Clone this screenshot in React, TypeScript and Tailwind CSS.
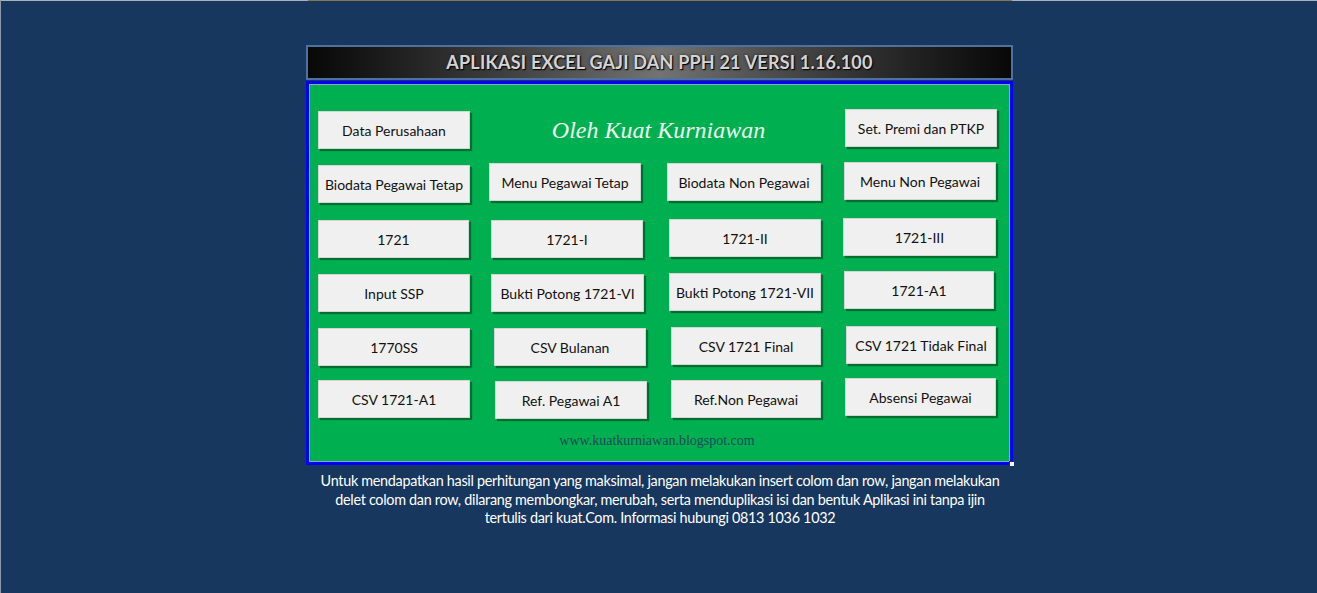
import React from "react";

type Btn = { label: string; off: string; w?: string };

// offsets keep the slightly uneven placement of the sheet's buttons
const rows: (Btn | null)[][] = [
  [{ label: "Data Perusahaan", off: "" }, null, null, { label: "Set. Premi dan PTKP", off: "ml-[2px] mt-[-2px]" }],
  [
    { label: "Biodata Pegawai Tetap", off: "" },
    { label: "Menu Pegawai Tetap", off: "ml-[-4px] mt-[-2px]" },
    { label: "Biodata Non Pegawai", off: "ml-[-1px] mt-[-2px]", w: "w-[154px]" },
    { label: "Menu Non Pegawai", off: "ml-[1px] mt-[-3px]" },
  ],
  [
    { label: "1721", off: "mt-[1px]", w: "w-[151px]" },
    { label: "1721-I", off: "ml-[-2px] mt-[1px]" },
    { label: "1721-II", off: "ml-[1px]" },
    { label: "1721-III", off: "mt-[-1px]", w: "w-[153px]" },
  ],
  [
    { label: "Input SSP", off: "mt-[1px]" },
    { label: "Bukti Potong 1721-VI", off: "ml-[-2px] mt-[1px]", w: "w-[153px]" },
    { label: "Bukti Potong 1721-VII", off: "ml-[1px]" },
    { label: "1721-A1", off: "ml-[1px] mt-[-2px]", w: "w-[150px]" },
  ],
  [
    { label: "1770SS", off: "mt-[1px]" },
    { label: "CSV Bulanan", off: "ml-[1px] mt-[1px]" },
    { label: "CSV 1721 Final", off: "ml-[3px]", w: "w-[150px]" },
    { label: "CSV 1721 Tidak Final", off: "ml-[3px] mt-[-1px]", w: "w-[150px]" },
  ],
  [
    { label: "CSV 1721-A1", off: "mt-[-1px]" },
    { label: "Ref. Pegawai A1", off: "ml-[2px]" },
    { label: "Ref.Non Pegawai", off: "ml-[3px] mt-[-1px]", w: "w-[150px]" },
    { label: "Absensi Pegawai", off: "ml-[2px] mt-[-3px]", w: "w-[151px]" },
  ],
];

function SheetButton({ b }: { b: Btn }) {
  return (
    <button
      className={`${b.w ?? "w-[152px]"} ${b.off} h-[38px] bg-[#f0f0f0] text-[14px] text-[#111] font-['Lato',sans-serif] border border-[#d4d4d4] shadow-[2px_2px_1px_rgba(0,0,0,0.38)] flex items-center justify-center`}
    >
      {b.label}
    </button>
  );
}

export default function App() {
  return (
    <div className="relative min-h-[593px] w-full bg-[#17375e] overflow-hidden">
      {/* thin sheet edge lines */}
      <div className="flex h-px">
        <div className="w-[308px] bg-[#a7b0bc]" />
        <div className="w-[704px] bg-[#8a7553]" />
        <div className="flex-1 bg-[#a7b0bc]" />
      </div>
      <div className="absolute left-0 top-0 h-full w-px bg-[#8f9aa8]" />

      <div className="ml-[306px] mt-[44px] w-[707px]">
        {/* header bar */}
        <div className="h-[35px] border-2 border-[#4d71a0] bg-linear-to-r from-[#080808] via-[#737373] to-[#080808] flex items-center justify-center">
          <span className="font-['Lato',sans-serif] font-bold text-[18px] tracking-[0.2px] text-[#d4d4d4] [text-shadow:1px_1px_1px_#000,0_0_3px_#222]">
            APLIKASI EXCEL GAJI DAN PPH 21 VERSI 1.16.100
          </span>
        </div>

        {/* green panel */}
        <div className="relative mt-[1px] h-[384px] border-[3px] border-[#0000ff] bg-[#00b050] shadow-[inset_0_0_0_1px_#8ea6c6] pl-[9px] pt-[27px]">
          <div className="grid grid-cols-[152px_152px_152px_152px] gap-x-[23px] gap-y-[16px] auto-rows-[38px]">
            {rows.map((r, ri) =>
              ri === 0 ? (
                <React.Fragment key={ri}>
                  <SheetButton b={r[0]!} />
                  <div className="col-span-2 flex items-center justify-center pl-[4px]">
                    <span className="font-['Liberation_Serif',serif] italic text-[24px] text-[#f0fbf0]">
                      Oleh Kuat Kurniawan
                    </span>
                  </div>
                  <SheetButton b={r[3]!} />
                </React.Fragment>
              ) : (
                r.map((b, ci) => <SheetButton key={`${ri}-${ci}`} b={b!} />)
              )
            )}
          </div>
          <div className="mt-[11px] pr-[14px] text-center font-['Liberation_Serif',serif] text-[14px] text-[#1c4a5a]">
            www.kuatkurniawan.blogspot.com
          </div>
          {/* selection handle */}
          <div className="absolute right-[-5px] bottom-[-5px] h-[6px] w-[6px] border border-[#17375e] bg-white" />
        </div>

        {/* footer note */}
        <p className="mt-[7px] ml-[-26px] w-[760px] text-center font-['Lato',sans-serif] text-[14.4px] leading-[18.5px] text-white tracking-[-0.3px]">
          Untuk mendapatkan hasil perhitungan yang maksimal, jangan melakukan insert colom dan row, jangan melakukan
          <br />
          delet colom dan row, dilarang membongkar, merubah, serta menduplikasi isi dan bentuk Aplikasi ini tanpa ijin
          <br />
          tertulis dari kuat.Com. Informasi hubungi 0813 1036 1032
        </p>
      </div>
    </div>
  );
}
